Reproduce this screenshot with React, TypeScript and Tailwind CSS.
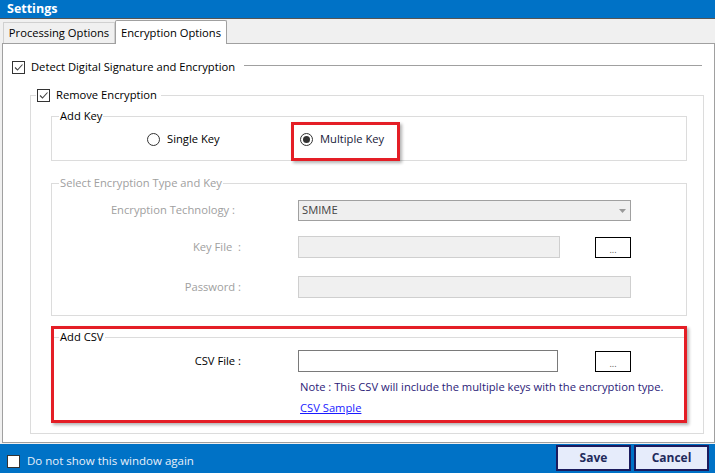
import React from "react";

const FONT = { fontFamily: '"Open Sans", "Noto Sans", sans-serif' };

function CheckBox({ checked = true }: { checked?: boolean }) {
  return (
    <span className="inline-flex w-[13px] h-[13px] shrink-0 border border-[#333] bg-white">
      {checked && (
        <svg viewBox="0 0 11 11" className="w-[11px] h-[11px]">
          <path d="M2 5.5 L4.5 8 L9.5 2.5" fill="none" stroke="#444" strokeWidth="1.1" />
        </svg>
      )}
    </span>
  );
}

function Radio({ checked = false }: { checked?: boolean }) {
  return (
    <span className="inline-flex items-center justify-center w-[13px] h-[13px] shrink-0 rounded-full border border-[#333] bg-white">
      {checked && <span className="w-[7px] h-[7px] rounded-full bg-[#333]" />}
    </span>
  );
}

function Dots({ className = "" }: { className?: string }) {
  return (
    <button className={`w-[36px] h-[21px] border border-black bg-white flex items-end justify-center pb-[3px] text-[9px] leading-[9px] text-[#555] ${className}`}>
      ...
    </button>
  );
}

export default function App() {
  return (
    <div className="w-[715px] h-[473px] bg-[#f0f0f0] flex flex-col overflow-hidden text-[11.2px] text-black" style={FONT}>
      {/* ── Title bar ─────────────────────────────── */}
      <div className="h-[19px] bg-[#0072c6] border-b border-[#555] flex items-center px-[7px]">
        <span className="text-white font-bold text-[12.5px] leading-[18px]">Settings</span>
      </div>

      {/* ── Tabs ──────────────────────────────────── */}
      <div className="h-[24px] flex items-end pl-[3px]">
        <div className="h-[21px] w-[112px] border border-b-0 border-[#d0d0d0] bg-[#f0f0f0] flex items-center justify-center leading-[16px]">
          Processing Options
        </div>
        <div className="h-[24px] w-[112px] border border-b-0 border-[#a0a0a0] rounded-t-[2px] bg-white flex items-center justify-center leading-[16px] -mb-[1px] relative z-10">
          Encryption Options
        </div>
      </div>

      {/* ── Panel ─────────────────────────────────── */}
      <div className="mx-[2px] w-[713px] h-[400px] border border-[#a0a0a0] bg-white flex flex-col">
        {/* Detect row */}
        <div className="mt-[15px] pl-[9px] mr-[12px] h-[16px] flex items-center gap-[6px]">
          <CheckBox />
          <span className="leading-[16px] whitespace-nowrap">Detect Digital Signature and Encryption</span>
          <span className="flex-1 ml-[3px] border-t border-[#a0a0a0] h-0 -mt-[4px]" />
        </div>

        {/* Remove Encryption group */}
        <fieldset className="mt-[12px] ml-[27px] mr-[10px] border border-[#dcdcdc] pb-[10px]">
          <legend className="ml-[5px] px-[1px] flex items-center gap-[6px] leading-[16px]">
            <CheckBox />
            <span className="pr-[3px]">Remove Encryption</span>
          </legend>

          {/* Add Key */}
          <fieldset className="mt-[5px] ml-[20px] mr-[16px] border border-[#dcdcdc]">
            <legend className="ml-[7px] px-[1px] leading-[16px]">Add Key</legend>
            <div className="-mt-[2px] flex items-start pl-[95px]">
              <label className="w-[144px] mt-[9px] h-[16px] flex items-center gap-[7px]">
                <Radio />
                <span>Single Key</span>
              </label>
              <div className="h-[39px] w-[109px] border-[3px] border-[#e41e26] shadow-[2px_2px_3px_rgba(0,0,0,0.3)] pl-[6px] pt-[6px] -mb-[1px]">
                <label className="h-[16px] flex items-center gap-[7px]">
                  <Radio checked />
                  <span className="text-[#1a1a3a]">Multiple Key</span>
                </label>
              </div>
            </div>
          </fieldset>

          {/* Select Encryption Type and Key (disabled) */}
          <fieldset className="mt-[14px] ml-[20px] mr-[16px] border border-[#dcdcdc] pb-[17px] text-[#a0a0a0]">
            <legend className="ml-[7px] px-[1px] leading-[16px]">Select Encryption Type and Key</legend>
            <div className="mt-[9px] h-[21px] flex items-center">
              <span className="w-[189px] text-right pr-[6px]">Encryption Technology :</span>
              <div className="ml-[57px] w-[333px] h-[21px] border border-[#a0a0a0] bg-[#efefef] flex items-center px-[3px] text-[#444]">
                <span className="flex-1">SMIME</span>
                <svg viewBox="0 0 7 4" className="w-[7px] h-[4px] mr-[1px]">
                  <path d="M0 0 H7 L3.5 4 Z" fill="#999" />
                </svg>
              </div>
            </div>
            <div className="mt-[15px] h-[22px] flex items-center">
              <span className="w-[189px] text-right">Key File&nbsp; :</span>
              <div className="ml-[57px] w-[262px] h-[22px] border border-[#cfcfcf] bg-[#f0f0f0]" />
              <Dots className="ml-[35px]" />
            </div>
            <div className="mt-[18px] h-[22px] flex items-center">
              <span className="w-[189px] text-right">Password :</span>
              <div className="ml-[57px] w-[333px] h-[22px] border border-[#cfcfcf] bg-[#f0f0f0]" />
            </div>
          </fieldset>

          {/* Add CSV (highlighted) */}
          <div className="mt-[10px] ml-[20px] mr-[16px] border-[3px] border-[#e41e26] shadow-[2px_2px_3px_rgba(0,0,0,0.3)] pb-[4px]">
            <fieldset className="border-t border-[#dcdcdc]">
              <legend className="ml-[5px] px-[1px] leading-[16px]">Add CSV</legend>
              <div className="mt-[5px] h-[22px] flex items-center">
                <span className="w-[187px] text-right">CSV File :</span>
                <div className="ml-[57px] w-[260px] h-[22px] border border-[#7a7a7a] bg-white" />
                <Dots className="ml-[37px]" />
              </div>
              <div className="mt-[7px] ml-[246px] leading-[16px] text-[#2b2278]">
                Note : This CSV will include the multiple keys with the encryption type.
              </div>
              <div className="mt-[5px] ml-[246px] leading-[16px]">
                <a className="text-[#1a1aff] underline cursor-pointer">CSV Sample</a>
              </div>
            </fieldset>
          </div>
        </fieldset>
      </div>

      {/* ── Footer ────────────────────────────────── */}
      <div className="mt-[1px] flex-1 bg-[#0072c6] flex items-start pt-[1px] pr-[6px]">
        <label className="mt-[8px] ml-[7px] flex items-center gap-[7px] text-[#e8f0fa] text-[11.5px] leading-[16px]">
          <span className="w-[13px] h-[13px] bg-white border border-[#333]" />
          Do not show this window again
        </label>
        <div className="ml-auto flex gap-[3px]">
          <button className="w-[75px] h-[26px] bg-[#e6ecfb] border-2 border-[#1b1b5e] font-bold text-[#1f2a5c] text-[12px]">
            Save
          </button>
          <button className="w-[75px] h-[26px] bg-[#e6ecfb] border-2 border-[#1b1b5e] font-bold text-[#1f2a5c] text-[12px]">
            Cancel
          </button>
        </div>
      </div>
    </div>
  );
}
